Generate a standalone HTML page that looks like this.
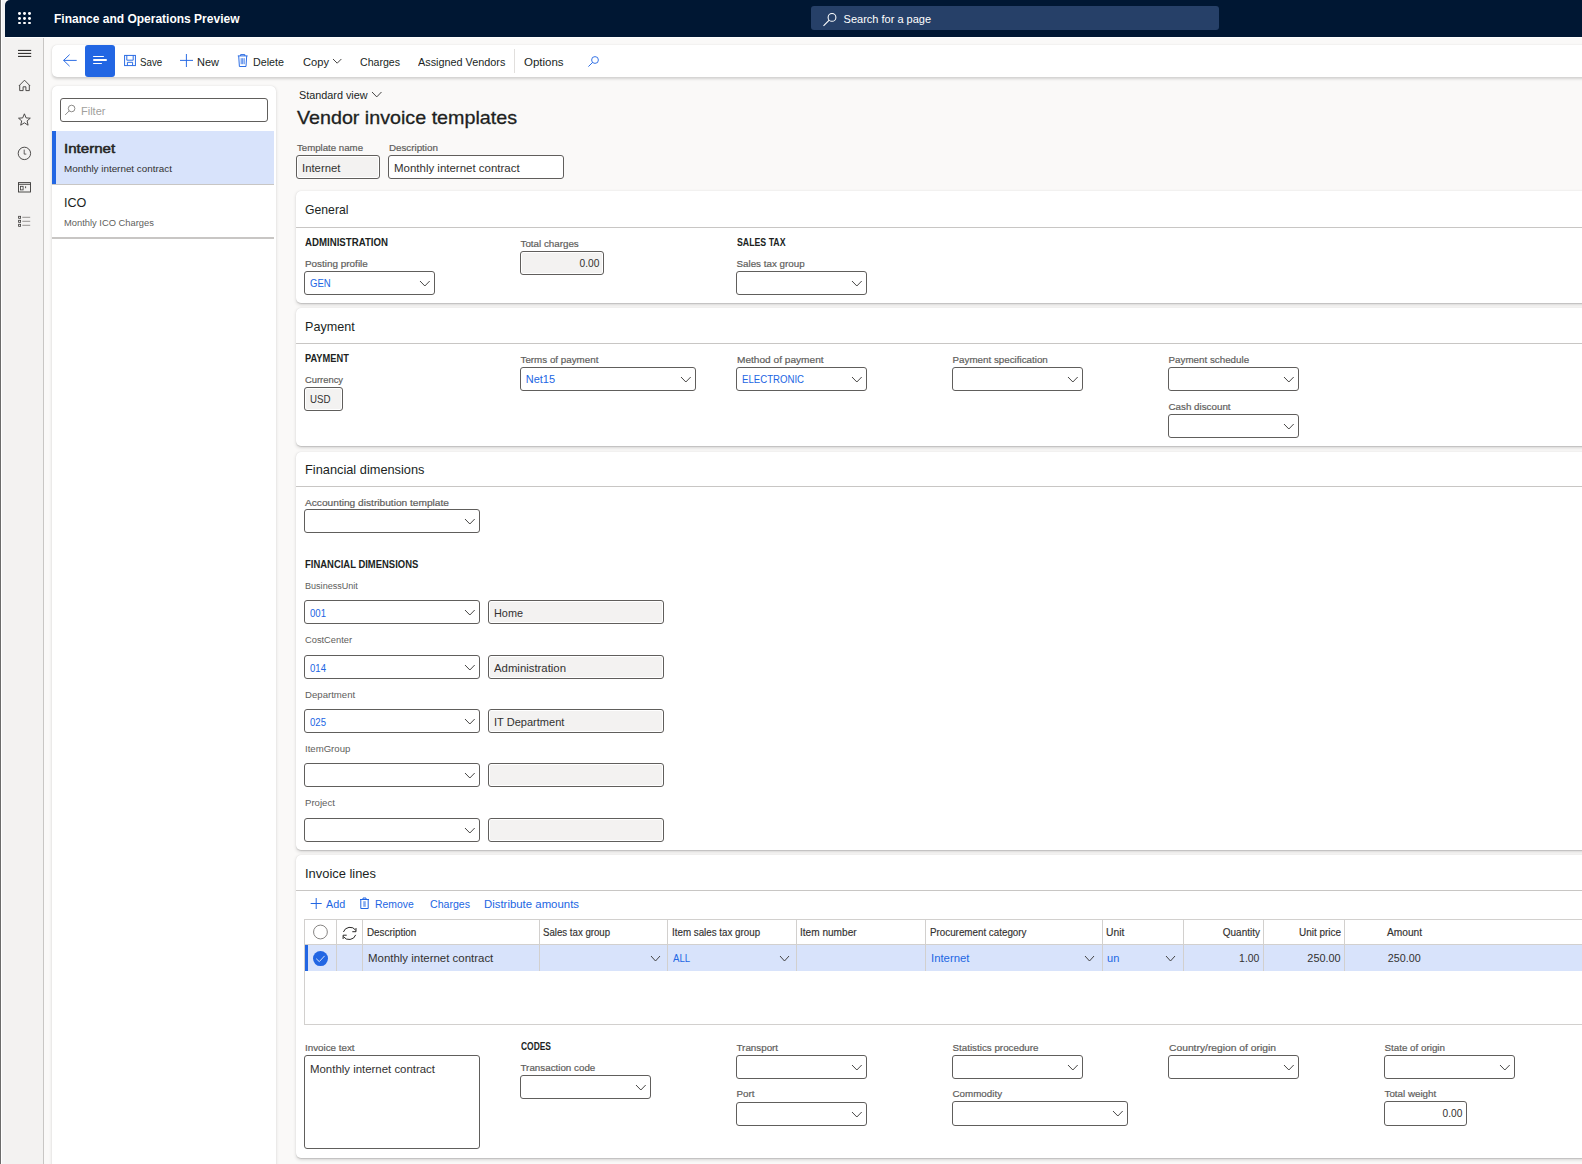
<!DOCTYPE html>
<html><head><meta charset="utf-8"><style>
html,body{margin:0;padding:0;}
body{width:1582px;height:1164px;overflow:hidden;position:relative;background:#faf9f8;font-family:"Liberation Sans",sans-serif;}
.t{position:absolute;white-space:nowrap;line-height:1;}
.b{position:absolute;}
.card{position:absolute;background:#fff;border-radius:5px;box-shadow:0 1.6px 3.6px rgba(0,0,0,.14),0 0.3px 0.9px rgba(0,0,0,.12);}
</style></head><body>

<div class="b" style="left:0px;top:0px;width:1px;height:1164px;background:#6b6b6b"></div>
<div class="b" style="left:1px;top:0px;width:4px;height:1164px;background:#f3f3f3"></div>
<div class="b" style="left:1px;top:0px;width:1px;height:1164px;background:#fff"></div>
<div class="b" style="left:5px;top:0px;width:1577px;height:37px;background:#001733;border-top-left-radius:5px"></div>
<div class="b" style="left:5px;top:37px;width:1577px;height:1px;background:#fff"></div>
<div class="b" style="left:5px;top:38px;width:38px;height:1126px;background:#f3f2f1"></div>
<div class="b" style="left:43px;top:38px;width:1px;height:1126px;background:#c8c6c4"></div>
<div class="b" style="left:18.2px;top:12.0px;width:2.8px;height:2.8px;border-radius:50%;background:#fff"></div>
<div class="b" style="left:18.2px;top:16.8px;width:2.8px;height:2.8px;border-radius:50%;background:#fff"></div>
<div class="b" style="left:18.2px;top:21.6px;width:2.8px;height:2.8px;border-radius:50%;background:#fff"></div>
<div class="b" style="left:23.1px;top:12.0px;width:2.8px;height:2.8px;border-radius:50%;background:#fff"></div>
<div class="b" style="left:23.1px;top:16.8px;width:2.8px;height:2.8px;border-radius:50%;background:#fff"></div>
<div class="b" style="left:23.1px;top:21.6px;width:2.8px;height:2.8px;border-radius:50%;background:#fff"></div>
<div class="b" style="left:28.0px;top:12.0px;width:2.8px;height:2.8px;border-radius:50%;background:#fff"></div>
<div class="b" style="left:28.0px;top:16.8px;width:2.8px;height:2.8px;border-radius:50%;background:#fff"></div>
<div class="b" style="left:28.0px;top:21.6px;width:2.8px;height:2.8px;border-radius:50%;background:#fff"></div>
<div id="t1" class="t" style="left:53.80px;top:12.50px;font-size:12px;color:#fff;font-weight:700;transform:scaleX(1.0006);transform-origin:left top;">Finance and Operations Preview</div>
<div class="b" style="left:811px;top:6px;width:408px;height:24px;background:#264068;border-radius:3px"></div>
<svg class="b" style="left:818px;top:8px" width="24" height="22" viewBox="818 8 24 22"><circle cx="832" cy="17.4" r="3.9" fill="none" stroke="#fff" stroke-width="1.05"/><line x1="829.2" y1="20.2" x2="823.5" y2="25.9" stroke="#fff" stroke-width="1.1"/></svg>
<div id="t2" class="t" style="left:843.60px;top:14.00px;font-size:11px;color:#fff;font-weight:400;">Search for a page</div>
<svg class="b" style="left:14px;top:44px" width="22" height="190" viewBox="14 44 22 190"><g fill="none" stroke="#3b3a39" stroke-width="0.9"><path d="M18 50.4 H31.2 M18 53.4 H31.2 M18 56.4 H31.2" stroke="#201f1e" stroke-width="1"/><path d="M19 85.8 L24.5 80.2 L30 85.8 M19.7 85.1 V90.6 H23.1 V86.8 H25.9 V90.6 H29.3 V85.1"/><path d="M24.4 113.8 L26.1 117.9 L30.3 118.2 L27.1 120.9 L28.1 125.2 L24.4 122.8 L20.7 125.2 L21.7 120.9 L18.5 118.2 L22.7 117.9 Z"/><circle cx="24.4" cy="153.4" r="6.2"/><path d="M24.2 149.6 V154.1 H26.3" stroke-width="0.8"/><rect x="18.5" y="182.6" width="12" height="9.4"/><path d="M18.5 184.3 H30.5"/><rect x="20.5" y="186.3" width="2.6" height="3.6" stroke-width="0.8"/><path d="M25.6 186.3 V188.2" stroke-width="0.9"/><rect x="18.6" y="216.3" width="2" height="2" stroke-width="0.8"/><rect x="18.6" y="220.3" width="2" height="2" stroke-width="0.8"/><rect x="18.6" y="224.3" width="2" height="2" stroke-width="0.8"/><path d="M22.3 217.3 H30.2 M22.3 221.3 H30.2 M22.3 225.3 H30.2" stroke="#8a8886" stroke-width="0.9"/></g></svg>
<div class="card" style="left:52px;top:45px;width:1540px;height:32px;box-shadow:0 1.4px 3px rgba(0,0,0,.16),0 0 1px rgba(0,0,0,.10);"></div>
<svg class="b" style="left:58px;top:48px" width="24" height="24" viewBox="58 48 24 24"><path d="M76.7 60.4 H63.6 M69.6 54.6 L63.6 60.4 L69.6 66.2" fill="none" stroke="#2266e3" stroke-width="0.95"/></svg>
<div class="b" style="left:85px;top:45px;width:30px;height:31.5px;background:#2266e3;border-radius:3px"></div>
<div class="b" style="left:93px;top:55.8px;width:11.2px;height:1.5px;background:#fff;border-radius:1px"></div>
<div class="b" style="left:93px;top:59.2px;width:13.9px;height:1.6px;background:#fff;border-radius:1px"></div>
<div class="b" style="left:93px;top:62.7px;width:9px;height:1.6px;background:#fff;border-radius:1px"></div>
<svg class="b" style="left:120px;top:50px" width="20" height="20" viewBox="120 50 20 20"><g fill="none" stroke="#2266e3" stroke-width="0.95"><rect x="124.6" y="55.4" width="10.8" height="10.2"/><path d="M126.8 55.4 V60.2 H133.2 V55.4"/><path d="M127.4 65.6 V62.3 H132.6 V65.6"/></g></svg>
<div id="t3" class="t" style="left:139.60px;top:57.00px;font-size:11px;color:#201f1e;font-weight:400;transform:scaleX(0.8852);transform-origin:left top;">Save</div>
<svg class="b" style="left:176px;top:50px" width="20" height="20" viewBox="176 50 20 20"><path d="M186.4 54 V67 M180 60.4 H193" stroke="#2266e3" stroke-width="0.95"/></svg>
<div id="t4" class="t" style="left:197.00px;top:57.00px;font-size:11px;color:#201f1e;font-weight:400;transform:scaleX(0.9993);transform-origin:left top;">New</div>
<svg class="b" style="left:234px;top:50px" width="18" height="20" viewBox="234 50 18 20"><g fill="none" stroke="#2266e3" stroke-width="0.95"><path d="M237.8 55.9 H247.6"/><path d="M240.6 55.9 V54.6 H244.8 V55.9"/><path d="M238.7 55.9 L239.4 66.5 H246 L246.7 55.9"/><path d="M241.2 58.2 V64.2 M242.7 58.2 V64.2 M244.2 58.2 V64.2" stroke-width="0.8"/></g></svg>
<div id="t5" class="t" style="left:253.00px;top:57.00px;font-size:11px;color:#201f1e;font-weight:400;transform:scaleX(0.9749);transform-origin:left top;">Delete</div>
<div id="t6" class="t" style="left:303.00px;top:57.00px;font-size:11px;color:#201f1e;font-weight:400;transform:scaleX(1.0122);transform-origin:left top;">Copy</div>
<svg class="b" style="left:332.2px;top:58.3px" width="10.4" height="6.2" viewBox="-1 -1 10.4 6.2"><polyline points="0,0 4.2,4.2 8.4,0" fill="none" stroke="#3b3a39" stroke-width="0.95"/></svg>
<div id="t7" class="t" style="left:360.00px;top:57.00px;font-size:11px;color:#201f1e;font-weight:400;transform:scaleX(0.9620);transform-origin:left top;">Charges</div>
<div id="t8" class="t" style="left:418.10px;top:57.00px;font-size:11px;color:#201f1e;font-weight:400;transform:scaleX(0.9857);transform-origin:left top;">Assigned Vendors</div>
<div class="b" style="left:514px;top:49px;width:1px;height:24px;background:#e1dfdd"></div>
<div id="t9" class="t" style="left:524.30px;top:57.00px;font-size:11px;color:#201f1e;font-weight:400;transform:scaleX(1.0443);transform-origin:left top;">Options</div>
<svg class="b" style="left:584px;top:52px" width="16" height="16" viewBox="584 52 16 16"><circle cx="595" cy="60" r="3.4" fill="none" stroke="#2266e3" stroke-width="0.9"/><line x1="592.6" y1="62.4" x2="588.4" y2="66.6" stroke="#2266e3" stroke-width="0.95"/></svg>
<div class="card" style="left:52px;top:86px;width:224px;height:1100px;"></div>
<div class="b" style="left:60px;top:98px;width:208px;height:24px;border:1px solid #605e5c;border-radius:3px;box-sizing:border-box;background:#fff"></div>
<svg class="b" style="left:62px;top:102px" width="16" height="16" viewBox="62 102 16 16"><circle cx="71.6" cy="108.5" r="3.3" fill="none" stroke="#797775" stroke-width="0.85"/><line x1="69.2" y1="110.9" x2="65.2" y2="114.9" stroke="#797775" stroke-width="0.85"/></svg>
<div id="t10" class="t" style="left:81.00px;top:106.00px;font-size:11px;color:#a19f9d;font-weight:400;">Filter</div>
<div class="b" style="left:52px;top:131px;width:222px;height:53px;background:#d8e3fb"></div>
<div class="b" style="left:52px;top:131px;width:4px;height:53px;background:#2266e3"></div>
<div class="b" style="left:52px;top:184px;width:222px;height:1px;background:#c8c6c4"></div>
<div id="t11" class="t" style="left:64.20px;top:142.30px;font-size:13.4px;color:#252423;font-weight:400;transform:scaleX(1.1272);transform-origin:left top;-webkit-text-stroke:0.5px #252423;">Internet</div>
<div id="t12" class="t" style="left:64.00px;top:164.85px;font-size:9.3px;color:#323130;font-weight:400;transform:scaleX(1.0598);transform-origin:left top;">Monthly internet contract</div>
<div id="t13" class="t" style="left:64.10px;top:196.20px;font-size:13.6px;color:#201f1e;font-weight:400;transform:scaleX(0.9267);transform-origin:left top;">ICO</div>
<div id="t14" class="t" style="left:64.00px;top:218.90px;font-size:9.2px;color:#605e5c;font-weight:400;transform:scaleX(1.0176);transform-origin:left top;">Monthly ICO Charges</div>
<div class="b" style="left:52px;top:237px;width:222px;height:1.5px;background:#c8c6c4"></div>
<div id="t15" class="t" style="left:298.70px;top:90.10px;font-size:10.8px;color:#201f1e;font-weight:400;transform:scaleX(1.0026);transform-origin:left top;">Standard view</div>
<svg class="b" style="left:370.7px;top:91px" width="11.5" height="6.9" viewBox="-1 -1 11.5 6.9"><polyline points="0,0 4.75,4.9 9.5,0" fill="none" stroke="#3b3a39" stroke-width="0.95"/></svg>
<div id="t16" class="t" style="left:297.00px;top:108.80px;font-size:18.4px;color:#201f1e;font-weight:400;transform:scaleX(1.0706);transform-origin:left top;-webkit-text-stroke:0.3px #201f1e;">Vendor invoice templates</div>
<div id="t17" class="t" style="left:297.10px;top:143.10px;font-size:9.8px;color:#605e5c;font-weight:400;transform:scaleX(0.9853);transform-origin:left top;-webkit-text-stroke:0.2px #605e5c;">Template name</div>
<div id="t18" class="t" style="left:388.90px;top:143.10px;font-size:9.8px;color:#605e5c;font-weight:400;-webkit-text-stroke:0.2px #605e5c;">Description</div>
<div class="b" style="left:296px;top:155px;width:84px;height:24px;background:#f3f2f1;border:1px solid #605e5c;border-radius:3px;box-sizing:border-box;box-shadow:inset 0 0 0 1px #fff;"></div>
<div id="t19" class="t" style="left:301.70px;top:163.00px;font-size:11px;color:#323130;font-weight:400;transform:scaleX(1.0291);transform-origin:left top;">Internet</div>
<div class="b" style="left:388px;top:155px;width:176px;height:24px;background:#fff;border:1px solid #605e5c;border-radius:3px;box-sizing:border-box;"></div>
<div id="t20" class="t" style="left:393.70px;top:163.00px;font-size:11px;color:#323130;font-weight:400;transform:scaleX(1.0427);transform-origin:left top;">Monthly internet contract</div>
<div class="card" style="left:296px;top:191px;width:1300px;height:112px;"></div>
<div class="b" style="left:296px;top:227px;width:1300px;height:1px;background:#c8c6c4"></div>
<div id="t21" class="t" style="left:304.80px;top:204.40px;font-size:12.2px;color:#201f1e;font-weight:400;transform:scaleX(1.0032);transform-origin:left top;">General</div>
<div id="t22" class="t" style="left:305.00px;top:237.80px;font-size:10.4px;color:#201f1e;font-weight:700;transform:scaleX(0.9296);transform-origin:left top;">ADMINISTRATION</div>
<div id="t23" class="t" style="left:305.00px;top:259.10px;font-size:9.8px;color:#605e5c;font-weight:400;transform:scaleX(1.0114);transform-origin:left top;-webkit-text-stroke:0.2px #605e5c;">Posting profile</div>
<div class="b" style="left:304px;top:271px;width:131px;height:24px;background:#fff;border:1px solid #605e5c;border-radius:3px;box-sizing:border-box;"></div>
<div id="t24" class="t" style="left:309.70px;top:278.00px;font-size:11px;color:#2266e3;font-weight:400;transform:scaleX(0.8682);transform-origin:left top;">GEN</div>
<svg class="b" style="left:419.4px;top:279.5px" width="11.7" height="7" viewBox="-1 -1 11.7 7"><polyline points="0,0 4.85,5 9.7,0" fill="none" stroke="#3b3a39" stroke-width="0.95"/></svg>
<div id="t25" class="t" style="left:520.50px;top:239.10px;font-size:9.8px;color:#605e5c;font-weight:400;-webkit-text-stroke:0.2px #605e5c;">Total charges</div>
<div class="b" style="left:520px;top:251px;width:84px;height:24px;background:#f3f2f1;border:1px solid #605e5c;border-radius:3px;box-sizing:border-box;box-shadow:inset 0 0 0 1px #fff;"></div>
<div id="t26" class="t" style="right:983.00px;top:258.00px;font-size:11px;color:#323130;font-weight:400;transform:scaleX(0.9243);transform-origin:right top;">0.00</div>
<div id="t27" class="t" style="left:736.50px;top:237.80px;font-size:10.4px;color:#201f1e;font-weight:700;transform:scaleX(0.8428);transform-origin:left top;">SALES TAX</div>
<div id="t28" class="t" style="left:736.50px;top:259.10px;font-size:9.8px;color:#605e5c;font-weight:400;-webkit-text-stroke:0.2px #605e5c;">Sales tax group</div>
<div class="b" style="left:736px;top:271px;width:131px;height:24px;background:#fff;border:1px solid #605e5c;border-radius:3px;box-sizing:border-box;"></div>
<svg class="b" style="left:851.4px;top:279.5px" width="11.7" height="7" viewBox="-1 -1 11.7 7"><polyline points="0,0 4.85,5 9.7,0" fill="none" stroke="#3b3a39" stroke-width="0.95"/></svg>
<div class="card" style="left:296px;top:307.5px;width:1300px;height:138.5px;"></div>
<div class="b" style="left:296px;top:343px;width:1300px;height:1px;background:#c8c6c4"></div>
<div id="t29" class="t" style="left:304.80px;top:321.40px;font-size:12.2px;color:#201f1e;font-weight:400;transform:scaleX(1.0331);transform-origin:left top;">Payment</div>
<div id="t30" class="t" style="left:305.00px;top:353.80px;font-size:10.4px;color:#201f1e;font-weight:700;transform:scaleX(0.8925);transform-origin:left top;">PAYMENT</div>
<div id="t31" class="t" style="left:305.00px;top:375.10px;font-size:9.8px;color:#605e5c;font-weight:400;transform:scaleX(0.9560);transform-origin:left top;-webkit-text-stroke:0.2px #605e5c;">Currency</div>
<div class="b" style="left:304px;top:387px;width:39px;height:24px;background:#f3f2f1;border:1px solid #605e5c;border-radius:3px;box-sizing:border-box;box-shadow:inset 0 0 0 1px #fff;"></div>
<div id="t32" class="t" style="left:309.70px;top:394.00px;font-size:11px;color:#323130;font-weight:400;transform:scaleX(0.8823);transform-origin:left top;">USD</div>
<div id="t33" class="t" style="left:520.50px;top:355.10px;font-size:9.8px;color:#605e5c;font-weight:400;-webkit-text-stroke:0.2px #605e5c;">Terms of payment</div>
<div class="b" style="left:520px;top:367px;width:176px;height:24px;background:#fff;border:1px solid #605e5c;border-radius:3px;box-sizing:border-box;"></div>
<div id="t34" class="t" style="left:525.70px;top:374.00px;font-size:11px;color:#2266e3;font-weight:400;">Net15</div>
<svg class="b" style="left:680.4px;top:375.5px" width="11.7" height="7" viewBox="-1 -1 11.7 7"><polyline points="0,0 4.85,5 9.7,0" fill="none" stroke="#3b3a39" stroke-width="0.95"/></svg>
<div id="t35" class="t" style="left:736.80px;top:355.10px;font-size:9.8px;color:#605e5c;font-weight:400;transform:scaleX(1.0325);transform-origin:left top;-webkit-text-stroke:0.2px #605e5c;">Method of payment</div>
<div class="b" style="left:736px;top:367px;width:131px;height:24px;background:#fff;border:1px solid #605e5c;border-radius:3px;box-sizing:border-box;"></div>
<div id="t36" class="t" style="left:741.70px;top:374.00px;font-size:11px;color:#2266e3;font-weight:400;transform:scaleX(0.8744);transform-origin:left top;">ELECTRONIC</div>
<svg class="b" style="left:851.4px;top:375.5px" width="11.7" height="7" viewBox="-1 -1 11.7 7"><polyline points="0,0 4.85,5 9.7,0" fill="none" stroke="#3b3a39" stroke-width="0.95"/></svg>
<div id="t37" class="t" style="left:952.50px;top:355.10px;font-size:9.8px;color:#605e5c;font-weight:400;-webkit-text-stroke:0.2px #605e5c;">Payment specification</div>
<div class="b" style="left:952px;top:367px;width:131px;height:24px;background:#fff;border:1px solid #605e5c;border-radius:3px;box-sizing:border-box;"></div>
<svg class="b" style="left:1067.4px;top:375.5px" width="11.7" height="7" viewBox="-1 -1 11.7 7"><polyline points="0,0 4.85,5 9.7,0" fill="none" stroke="#3b3a39" stroke-width="0.95"/></svg>
<div id="t38" class="t" style="left:1168.50px;top:355.10px;font-size:9.8px;color:#605e5c;font-weight:400;-webkit-text-stroke:0.2px #605e5c;">Payment schedule</div>
<div class="b" style="left:1168px;top:367px;width:131px;height:24px;background:#fff;border:1px solid #605e5c;border-radius:3px;box-sizing:border-box;"></div>
<svg class="b" style="left:1283.4px;top:375.5px" width="11.7" height="7" viewBox="-1 -1 11.7 7"><polyline points="0,0 4.85,5 9.7,0" fill="none" stroke="#3b3a39" stroke-width="0.95"/></svg>
<div id="t39" class="t" style="left:1168.50px;top:402.10px;font-size:9.8px;color:#605e5c;font-weight:400;-webkit-text-stroke:0.2px #605e5c;">Cash discount</div>
<div class="b" style="left:1168px;top:414px;width:131px;height:24px;background:#fff;border:1px solid #605e5c;border-radius:3px;box-sizing:border-box;"></div>
<svg class="b" style="left:1283.4px;top:422.5px" width="11.7" height="7" viewBox="-1 -1 11.7 7"><polyline points="0,0 4.85,5 9.7,0" fill="none" stroke="#3b3a39" stroke-width="0.95"/></svg>
<div class="card" style="left:296px;top:451.5px;width:1300px;height:398.5px;"></div>
<div class="b" style="left:296px;top:486px;width:1300px;height:1px;background:#c8c6c4"></div>
<div id="t40" class="t" style="left:304.80px;top:464.40px;font-size:12.2px;color:#201f1e;font-weight:400;transform:scaleX(1.0500);transform-origin:left top;">Financial dimensions</div>
<div id="t41" class="t" style="left:305.00px;top:498.10px;font-size:9.8px;color:#605e5c;font-weight:400;transform:scaleX(1.0369);transform-origin:left top;-webkit-text-stroke:0.2px #605e5c;">Accounting distribution template</div>
<div class="b" style="left:304px;top:509px;width:176px;height:24px;background:#fff;border:1px solid #605e5c;border-radius:3px;box-sizing:border-box;"></div>
<svg class="b" style="left:464.4px;top:517.5px" width="11.7" height="7" viewBox="-1 -1 11.7 7"><polyline points="0,0 4.85,5 9.7,0" fill="none" stroke="#3b3a39" stroke-width="0.95"/></svg>
<div id="t42" class="t" style="left:305.00px;top:559.80px;font-size:10.4px;color:#201f1e;font-weight:700;transform:scaleX(0.9100);transform-origin:left top;">FINANCIAL DIMENSIONS</div>
<div id="t43" class="t" style="left:305.00px;top:581.20px;font-size:9.6px;color:#605e5c;font-weight:400;transform:scaleX(0.9446);transform-origin:left top;">BusinessUnit</div>
<div class="b" style="left:304px;top:600px;width:176px;height:24px;background:#fff;border:1px solid #605e5c;border-radius:3px;box-sizing:border-box;"></div>
<div id="t44" class="t" style="left:309.70px;top:608.00px;font-size:11px;color:#2266e3;font-weight:400;transform:scaleX(0.8715);transform-origin:left top;">001</div>
<svg class="b" style="left:464.4px;top:608.5px" width="11.7" height="7" viewBox="-1 -1 11.7 7"><polyline points="0,0 4.85,5 9.7,0" fill="none" stroke="#3b3a39" stroke-width="0.95"/></svg>
<div class="b" style="left:488px;top:600px;width:176px;height:24px;background:#f3f2f1;border:1px solid #605e5c;border-radius:3px;box-sizing:border-box;box-shadow:inset 0 0 0 1px #fff;"></div>
<div id="t45" class="t" style="left:493.70px;top:608.00px;font-size:11px;color:#323130;font-weight:400;transform:scaleX(0.9883);transform-origin:left top;">Home</div>
<div id="t46" class="t" style="left:305.00px;top:635.20px;font-size:9.6px;color:#605e5c;font-weight:400;transform:scaleX(0.9684);transform-origin:left top;">CostCenter</div>
<div class="b" style="left:304px;top:655px;width:176px;height:24px;background:#fff;border:1px solid #605e5c;border-radius:3px;box-sizing:border-box;"></div>
<div id="t47" class="t" style="left:309.70px;top:663.00px;font-size:11px;color:#2266e3;font-weight:400;transform:scaleX(0.8715);transform-origin:left top;">014</div>
<svg class="b" style="left:464.4px;top:663.5px" width="11.7" height="7" viewBox="-1 -1 11.7 7"><polyline points="0,0 4.85,5 9.7,0" fill="none" stroke="#3b3a39" stroke-width="0.95"/></svg>
<div class="b" style="left:488px;top:655px;width:176px;height:24px;background:#f3f2f1;border:1px solid #605e5c;border-radius:3px;box-sizing:border-box;box-shadow:inset 0 0 0 1px #fff;"></div>
<div id="t48" class="t" style="left:493.70px;top:663.00px;font-size:11px;color:#323130;font-weight:400;transform:scaleX(1.0330);transform-origin:left top;">Administration</div>
<div id="t49" class="t" style="left:305.00px;top:690.20px;font-size:9.6px;color:#605e5c;font-weight:400;transform:scaleX(1.0015);transform-origin:left top;">Department</div>
<div class="b" style="left:304px;top:709px;width:176px;height:24px;background:#fff;border:1px solid #605e5c;border-radius:3px;box-sizing:border-box;"></div>
<div id="t50" class="t" style="left:309.70px;top:717.00px;font-size:11px;color:#2266e3;font-weight:400;transform:scaleX(0.8715);transform-origin:left top;">025</div>
<svg class="b" style="left:464.4px;top:717.5px" width="11.7" height="7" viewBox="-1 -1 11.7 7"><polyline points="0,0 4.85,5 9.7,0" fill="none" stroke="#3b3a39" stroke-width="0.95"/></svg>
<div class="b" style="left:488px;top:709px;width:176px;height:24px;background:#f3f2f1;border:1px solid #605e5c;border-radius:3px;box-sizing:border-box;box-shadow:inset 0 0 0 1px #fff;"></div>
<div id="t51" class="t" style="left:493.70px;top:717.00px;font-size:11px;color:#323130;font-weight:400;transform:scaleX(1.0041);transform-origin:left top;">IT Department</div>
<div id="t52" class="t" style="left:305.00px;top:744.20px;font-size:9.6px;color:#605e5c;font-weight:400;">ItemGroup</div>
<div class="b" style="left:304px;top:763px;width:176px;height:24px;background:#fff;border:1px solid #605e5c;border-radius:3px;box-sizing:border-box;"></div>
<svg class="b" style="left:464.4px;top:771.5px" width="11.7" height="7" viewBox="-1 -1 11.7 7"><polyline points="0,0 4.85,5 9.7,0" fill="none" stroke="#3b3a39" stroke-width="0.95"/></svg>
<div class="b" style="left:488px;top:763px;width:176px;height:24px;background:#f3f2f1;border:1px solid #605e5c;border-radius:3px;box-sizing:border-box;box-shadow:inset 0 0 0 1px #fff;"></div>
<div id="t53" class="t" style="left:305.00px;top:798.20px;font-size:9.6px;color:#605e5c;font-weight:400;">Project</div>
<div class="b" style="left:304px;top:818px;width:176px;height:24px;background:#fff;border:1px solid #605e5c;border-radius:3px;box-sizing:border-box;"></div>
<svg class="b" style="left:464.4px;top:826.5px" width="11.7" height="7" viewBox="-1 -1 11.7 7"><polyline points="0,0 4.85,5 9.7,0" fill="none" stroke="#3b3a39" stroke-width="0.95"/></svg>
<div class="b" style="left:488px;top:818px;width:176px;height:24px;background:#f3f2f1;border:1px solid #605e5c;border-radius:3px;box-sizing:border-box;box-shadow:inset 0 0 0 1px #fff;"></div>
<div class="card" style="left:296px;top:855px;width:1300px;height:303px;"></div>
<div class="b" style="left:296px;top:890px;width:1300px;height:1px;background:#c8c6c4"></div>
<div id="t54" class="t" style="left:304.80px;top:868.40px;font-size:12.2px;color:#201f1e;font-weight:400;transform:scaleX(1.0585);transform-origin:left top;">Invoice lines</div>
<svg class="b" style="left:310px;top:897px" width="13" height="13" viewBox="0 0 13 13"><path d="M6.2 1 V12 M0.7 6.5 H11.7" stroke="#2266e3" stroke-width="1"/></svg>
<div id="t55" class="t" style="left:326.00px;top:899.15px;font-size:10.7px;color:#2266e3;font-weight:400;transform:scaleX(1.0089);transform-origin:left top;">Add</div>
<svg class="b" style="left:359px;top:897px" width="11" height="13" viewBox="0 0 11 13"><g fill="none" stroke="#2266e3" stroke-width="1"><path d="M1.8 2.5 H9.2 V11.5 H1.8 Z"/><path d="M1 2.5 H10 M4 2.5 V1 H7 V2.5"/></g><rect x="4.2" y="4.2" width="2.6" height="5.6" fill="#2266e3" opacity=".55"/></svg>
<div id="t56" class="t" style="left:375.30px;top:899.15px;font-size:10.7px;color:#2266e3;font-weight:400;transform:scaleX(0.9724);transform-origin:left top;">Remove</div>
<div id="t57" class="t" style="left:430.00px;top:899.15px;font-size:10.7px;color:#2266e3;font-weight:400;transform:scaleX(0.9899);transform-origin:left top;">Charges</div>
<div id="t58" class="t" style="left:484.00px;top:899.15px;font-size:10.7px;color:#2266e3;font-weight:400;transform:scaleX(1.0661);transform-origin:left top;">Distribute amounts</div>
<div class="b" style="left:304px;top:919px;width:1300px;height:1px;background:#d2d0ce"></div>
<div class="b" style="left:304px;top:944px;width:1300px;height:1px;background:#d2d0ce"></div>
<div class="b" style="left:304px;top:945px;width:1300px;height:26px;background:#d8e3fb"></div>
<div class="b" style="left:304px;top:945px;width:4px;height:26px;background:#2266e3"></div>
<div class="b" style="left:304px;top:1024px;width:1300px;height:1px;background:#d2d0ce"></div>
<div class="b" style="left:304px;top:919px;width:1px;height:106px;background:#d2d0ce"></div>
<div class="b" style="left:336px;top:920px;width:1px;height:51px;background:#d2d0ce"></div>
<div class="b" style="left:362px;top:920px;width:1px;height:51px;background:#d2d0ce"></div>
<div class="b" style="left:539px;top:920px;width:1px;height:51px;background:#d2d0ce"></div>
<div class="b" style="left:667px;top:920px;width:1px;height:51px;background:#d2d0ce"></div>
<div class="b" style="left:796px;top:920px;width:1px;height:51px;background:#d2d0ce"></div>
<div class="b" style="left:925px;top:920px;width:1px;height:51px;background:#d2d0ce"></div>
<div class="b" style="left:1102px;top:920px;width:1px;height:51px;background:#d2d0ce"></div>
<div class="b" style="left:1183px;top:920px;width:1px;height:51px;background:#d2d0ce"></div>
<div class="b" style="left:1263px;top:920px;width:1px;height:51px;background:#d2d0ce"></div>
<div class="b" style="left:1344px;top:920px;width:1px;height:51px;background:#d2d0ce"></div>
<div id="t59" class="t" style="left:366.50px;top:927.90px;font-size:10.2px;color:#323130;font-weight:400;transform:scaleX(0.9673);transform-origin:left top;-webkit-text-stroke:0.15px #323130;">Description</div>
<div id="t60" class="t" style="left:542.90px;top:927.90px;font-size:10.2px;color:#323130;font-weight:400;transform:scaleX(0.9478);transform-origin:left top;-webkit-text-stroke:0.15px #323130;">Sales tax group</div>
<div id="t61" class="t" style="left:671.60px;top:927.90px;font-size:10.2px;color:#323130;font-weight:400;transform:scaleX(0.9604);transform-origin:left top;-webkit-text-stroke:0.15px #323130;">Item sales tax group</div>
<div id="t62" class="t" style="left:800.40px;top:927.90px;font-size:10.2px;color:#323130;font-weight:400;transform:scaleX(0.9897);transform-origin:left top;-webkit-text-stroke:0.15px #323130;">Item number</div>
<div id="t63" class="t" style="left:929.70px;top:927.90px;font-size:10.2px;color:#323130;font-weight:400;transform:scaleX(0.9627);transform-origin:left top;-webkit-text-stroke:0.15px #323130;">Procurement category</div>
<div id="t64" class="t" style="left:1106.00px;top:927.90px;font-size:10.2px;color:#323130;font-weight:400;transform:scaleX(1.0097);transform-origin:left top;-webkit-text-stroke:0.15px #323130;">Unit</div>
<div id="t65" class="t" style="right:322.20px;top:927.90px;font-size:10.2px;color:#323130;font-weight:400;transform:scaleX(0.9802);transform-origin:right top;-webkit-text-stroke:0.15px #323130;">Quantity</div>
<div id="t66" class="t" style="right:241.00px;top:927.90px;font-size:10.2px;color:#323130;font-weight:400;transform:scaleX(0.9784);transform-origin:right top;-webkit-text-stroke:0.15px #323130;">Unit price</div>
<div id="t67" class="t" style="right:160.20px;top:927.90px;font-size:10.2px;color:#323130;font-weight:400;transform:scaleX(0.9997);transform-origin:right top;-webkit-text-stroke:0.15px #323130;">Amount</div>
<svg class="b" style="left:304px;top:920px" width="60" height="52" viewBox="304 920 60 52"><circle cx="320.45" cy="932" r="6.9" fill="none" stroke="#797775" stroke-width="0.9"/><circle cx="320.5" cy="958.6" r="7.5" fill="#2266e3"/><path d="M316.2 958.7 L319.3 961.6 L324.6 955.9" fill="none" stroke="#fff" stroke-width="0.9" opacity=".9"/><g fill="none" stroke="#201f1e" stroke-width="0.95"><path d="M343.4 932 A7 7 0 0 1 355.7 930.2"/><path d="M352.3 931.7 H356 V928"/><path d="M355.7 934.9 A7 7 0 0 1 343.4 936.6"/><path d="M346.7 935.2 H343.1 V939"/></g></svg>
<div id="t68" class="t" style="left:367.70px;top:953.00px;font-size:11px;color:#323130;font-weight:400;transform:scaleX(1.0402);transform-origin:left top;">Monthly internet contract</div>
<svg class="b" style="left:650px;top:955px" width="11" height="7" viewBox="-1 -1 11 7"><polyline points="0,0 4.5,5 9,0" fill="none" stroke="#3b3a39" stroke-width="0.95"/></svg>
<div id="t69" class="t" style="left:673.00px;top:953.00px;font-size:11px;color:#2266e3;font-weight:400;transform:scaleX(0.8785);transform-origin:left top;">ALL</div>
<svg class="b" style="left:779px;top:955px" width="11" height="7" viewBox="-1 -1 11 7"><polyline points="0,0 4.5,5 9,0" fill="none" stroke="#3b3a39" stroke-width="0.95"/></svg>
<div id="t70" class="t" style="left:930.50px;top:953.00px;font-size:11px;color:#2266e3;font-weight:400;transform:scaleX(1.0318);transform-origin:left top;">Internet</div>
<svg class="b" style="left:1084px;top:955px" width="11" height="7" viewBox="-1 -1 11 7"><polyline points="0,0 4.5,5 9,0" fill="none" stroke="#3b3a39" stroke-width="0.95"/></svg>
<div id="t71" class="t" style="left:1107.00px;top:953.00px;font-size:11px;color:#2266e3;font-weight:400;transform:scaleX(1.0041);transform-origin:left top;">un</div>
<svg class="b" style="left:1165px;top:955px" width="11" height="7" viewBox="-1 -1 11 7"><polyline points="0,0 4.5,5 9,0" fill="none" stroke="#3b3a39" stroke-width="0.95"/></svg>
<div id="t72" class="t" style="right:322.70px;top:953.00px;font-size:11px;color:#323130;font-weight:400;transform:scaleX(0.9476);transform-origin:right top;">1.00</div>
<div id="t73" class="t" style="right:241.50px;top:953.00px;font-size:11px;color:#323130;font-weight:400;transform:scaleX(0.9894);transform-origin:right top;">250.00</div>
<div id="t74" class="t" style="right:161.00px;top:953.00px;font-size:11px;color:#323130;font-weight:400;transform:scaleX(0.9746);transform-origin:right top;">250.00</div>
<div id="t75" class="t" style="left:305.00px;top:1043.10px;font-size:9.8px;color:#605e5c;font-weight:400;-webkit-text-stroke:0.2px #605e5c;">Invoice text</div>
<div class="b" style="left:304px;top:1055px;width:176px;height:94px;border:1px solid #605e5c;border-radius:3px;box-sizing:border-box;background:#fff"></div>
<div id="t76" class="t" style="left:310.00px;top:1064.00px;font-size:11px;color:#323130;font-weight:400;transform:scaleX(1.0377);transform-origin:left top;">Monthly internet contract</div>
<div id="t77" class="t" style="left:520.50px;top:1041.80px;font-size:10.4px;color:#201f1e;font-weight:700;transform:scaleX(0.8118);transform-origin:left top;">CODES</div>
<div id="t78" class="t" style="left:520.50px;top:1063.10px;font-size:9.8px;color:#605e5c;font-weight:400;-webkit-text-stroke:0.2px #605e5c;">Transaction code</div>
<div class="b" style="left:520px;top:1075px;width:131px;height:24px;background:#fff;border:1px solid #605e5c;border-radius:3px;box-sizing:border-box;"></div>
<svg class="b" style="left:635.4px;top:1083.5px" width="11.7" height="7" viewBox="-1 -1 11.7 7"><polyline points="0,0 4.85,5 9.7,0" fill="none" stroke="#3b3a39" stroke-width="0.95"/></svg>
<div id="t79" class="t" style="left:736.50px;top:1043.10px;font-size:9.8px;color:#605e5c;font-weight:400;-webkit-text-stroke:0.2px #605e5c;">Transport</div>
<div class="b" style="left:736px;top:1055px;width:131px;height:24px;background:#fff;border:1px solid #605e5c;border-radius:3px;box-sizing:border-box;"></div>
<svg class="b" style="left:851.4px;top:1063.5px" width="11.7" height="7" viewBox="-1 -1 11.7 7"><polyline points="0,0 4.85,5 9.7,0" fill="none" stroke="#3b3a39" stroke-width="0.95"/></svg>
<div id="t80" class="t" style="left:736.50px;top:1089.10px;font-size:9.8px;color:#605e5c;font-weight:400;-webkit-text-stroke:0.2px #605e5c;">Port</div>
<div class="b" style="left:736px;top:1102px;width:131px;height:24px;background:#fff;border:1px solid #605e5c;border-radius:3px;box-sizing:border-box;"></div>
<svg class="b" style="left:851.4px;top:1110.5px" width="11.7" height="7" viewBox="-1 -1 11.7 7"><polyline points="0,0 4.85,5 9.7,0" fill="none" stroke="#3b3a39" stroke-width="0.95"/></svg>
<div id="t81" class="t" style="left:952.50px;top:1043.10px;font-size:9.8px;color:#605e5c;font-weight:400;-webkit-text-stroke:0.2px #605e5c;">Statistics procedure</div>
<div class="b" style="left:952px;top:1055px;width:131px;height:24px;background:#fff;border:1px solid #605e5c;border-radius:3px;box-sizing:border-box;"></div>
<svg class="b" style="left:1067.4px;top:1063.5px" width="11.7" height="7" viewBox="-1 -1 11.7 7"><polyline points="0,0 4.85,5 9.7,0" fill="none" stroke="#3b3a39" stroke-width="0.95"/></svg>
<div id="t82" class="t" style="left:952.50px;top:1089.10px;font-size:9.8px;color:#605e5c;font-weight:400;-webkit-text-stroke:0.2px #605e5c;">Commodity</div>
<div class="b" style="left:952px;top:1101px;width:176px;height:25px;background:#fff;border:1px solid #605e5c;border-radius:3px;box-sizing:border-box;"></div>
<svg class="b" style="left:1112.4px;top:1109.5px" width="11.7" height="7" viewBox="-1 -1 11.7 7"><polyline points="0,0 4.85,5 9.7,0" fill="none" stroke="#3b3a39" stroke-width="0.95"/></svg>
<div id="t83" class="t" style="left:1168.50px;top:1043.10px;font-size:9.8px;color:#605e5c;font-weight:400;transform:scaleX(1.0506);transform-origin:left top;-webkit-text-stroke:0.2px #605e5c;">Country/region of origin</div>
<div class="b" style="left:1168px;top:1055px;width:131px;height:24px;background:#fff;border:1px solid #605e5c;border-radius:3px;box-sizing:border-box;"></div>
<svg class="b" style="left:1283.4px;top:1063.5px" width="11.7" height="7" viewBox="-1 -1 11.7 7"><polyline points="0,0 4.85,5 9.7,0" fill="none" stroke="#3b3a39" stroke-width="0.95"/></svg>
<div id="t84" class="t" style="left:1384.50px;top:1043.10px;font-size:9.8px;color:#605e5c;font-weight:400;-webkit-text-stroke:0.2px #605e5c;">State of origin</div>
<div class="b" style="left:1384px;top:1055px;width:131px;height:24px;background:#fff;border:1px solid #605e5c;border-radius:3px;box-sizing:border-box;"></div>
<svg class="b" style="left:1499.4px;top:1063.5px" width="11.7" height="7" viewBox="-1 -1 11.7 7"><polyline points="0,0 4.85,5 9.7,0" fill="none" stroke="#3b3a39" stroke-width="0.95"/></svg>
<div id="t85" class="t" style="left:1384.50px;top:1089.10px;font-size:9.8px;color:#605e5c;font-weight:400;-webkit-text-stroke:0.2px #605e5c;">Total weight</div>
<div class="b" style="left:1384px;top:1101px;width:83px;height:25px;background:#fff;border:1px solid #605e5c;border-radius:3px;box-sizing:border-box;"></div>
<div id="t86" class="t" style="right:120.00px;top:1108.00px;font-size:11px;color:#323130;font-weight:400;transform:scaleX(0.9243);transform-origin:right top;">0.00</div>
</body></html>
